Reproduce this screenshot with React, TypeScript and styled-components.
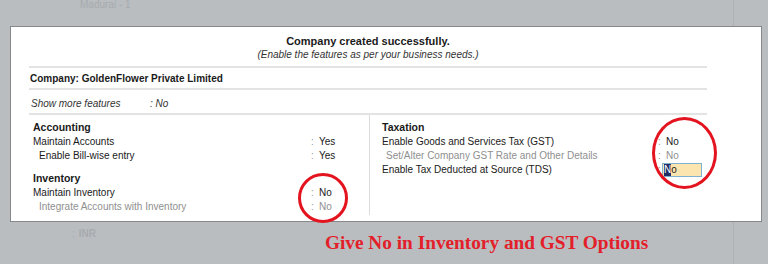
import React from "react";
import styled, { createGlobalStyle } from "styled-components";

const GlobalStyle = createGlobalStyle`
  html, body {
    margin: 0;
    padding: 0;
    background: #b9bdc0;
  }
  body {
    font-family: "Liberation Sans", Arial, sans-serif;
  }
`;

const Screen = styled.div`
  position: relative;
  width: 768px;
  height: 264px;
  overflow: hidden;
  background: #b9bdc0;
  display: flex;
`;

const Backdrop = styled.div`
  flex: 1;
  display: flex;
  flex-direction: column;
  justify-content: space-between;
  padding: 0 0 24px 72px;
  color: #a7abae;
  font-size: 10px;
`;

const FadedCity = styled.div`
  padding-left: 8px;
  line-height: 10px;
`;

const FadedCurrency = styled.div`
  font-weight: bold;
  line-height: 12px;

  span {
    font-weight: normal;
    margin-right: 4px;
  }
`;

const SideStrip = styled.div`
  width: 34px;
  border-left: 1px solid #adb1b4;
  background: #b9bdc0;
`;

const Dialog = styled.div`
  position: absolute;
  left: 10px;
  top: 26px;
  width: 713px;
  height: 194px;
  background: #fff;
  border: 1px solid #86898c;
  padding: 0 19px 0 18px;
  box-sizing: content-box;
  font-size: 10px;
  color: #1a1a1a;
  display: flex;
  flex-direction: column;
`;

const Inner = styled.div`
  width: 678px;
  display: flex;
  flex-direction: column;
  flex: 1;
`;

const Title = styled.div`
  margin-top: 7px;
  text-align: center;
  font-weight: bold;
  line-height: 14px;
  font-size: 11px;
`;

const Subtitle = styled.div`
  text-align: center;
  font-style: italic;
  line-height: 14px;
  color: #333;
`;

const Divider = styled.div<{ $gap: number }>`
  margin-top: ${({ $gap }) => $gap}px;
  height: 2px;
  background: #e3e3e3;
`;

const CompanyRow = styled.div`
  margin-top: 4px;
  padding-left: 1px;
  font-weight: bold;
  line-height: 14px;
`;

const ShowMore = styled.div`
  margin-top: 7px;
  padding-left: 2px;
  display: flex;
  font-style: italic;
  line-height: 14px;
  color: #333;

  span:first-child {
    width: 119px;
  }
`;

const Columns = styled.div`
  flex: 1;
  display: grid;
  grid-template-columns: 340px 1fr;
  margin-bottom: 6px;
`;

const Column = styled.div<{ $right?: boolean }>`
  padding: 5px ${({ $right }) => ($right ? "0 0 12px" : "0 0 4px")};
  border-left: ${({ $right }) => ($right ? "1px solid #dcdcdc" : "none")};
`;

const Heading = styled.div<{ $gap?: number }>`
  margin-top: ${({ $gap }) => $gap || 0}px;
  margin-bottom: 1px;
  font-weight: bold;
  font-size: 10.5px;
  line-height: 14px;
`;

const Row = styled.div<{ $indent: number; $dim?: boolean; $valueWidth: number }>`
  display: grid;
  grid-template-columns: 1fr ${({ $valueWidth }) => $valueWidth}px;
  line-height: 14px;
  padding-left: ${({ $indent }) => $indent}px;
  color: ${({ $dim }) => ($dim ? "#8f8f8f" : "#1a1a1a")};
`;

const Value = styled.div`
  display: flex;
  align-items: center;
`;

const Colon = styled.span`
  color: #9a9a9a;
  width: 8px;
`;

const EditBox = styled.span`
  display: inline-flex;
  align-items: center;
  width: 37px;
  height: 12px;
  margin-left: -4px;
  padding-left: 1px;
  background: #fde5b0;
  border: 1px solid #7fb2cf;
  color: #1a1a1a;
  line-height: 12px;
`;

const Caret = styled.span`
  background: #1f2f66;
  color: #fff;
`;

const Ring = styled.div<{ $x: number; $y: number; $w: number; $h: number }>`
  position: absolute;
  left: ${({ $x }) => $x}px;
  top: ${({ $y }) => $y}px;
  width: ${({ $w }) => $w}px;
  height: ${({ $h }) => $h}px;
  border: 3px solid #e3141f;
  border-radius: 50%;
  box-sizing: border-box;
  pointer-events: none;
`;

const Note = styled.div`
  position: absolute;
  left: 325px;
  top: 231px;
  font-family: "Liberation Serif", "Times New Roman", serif;
  font-weight: bold;
  font-size: 19.3px;
  line-height: 24px;
  color: #e3202a;
  white-space: nowrap;
`;

type Item = { label: string; value: React.ReactNode; sub?: boolean; dim?: boolean };

const accounting: Item[] = [
  { label: "Maintain Accounts", value: "Yes" },
  { label: "Enable Bill-wise entry", value: "Yes", sub: true },
];

const inventory: Item[] = [
  { label: "Maintain Inventory", value: "No" },
  { label: "Integrate Accounts with Inventory", value: "No", sub: true, dim: true },
];

const taxation: Item[] = [
  { label: "Enable Goods and Services Tax (GST)", value: "No" },
  { label: "Set/Alter Company GST Rate and Other Details", value: "No", sub: true, dim: true },
  {
    label: "Enable Tax Deducted at Source (TDS)",
    value: (
      <EditBox>
        <Caret>N</Caret>o
      </EditBox>
    ),
  },
];

const Rows = ({ items, valueWidth, indent }: { items: Item[]; valueWidth: number; indent: number }) => (
  <>
    {items.map((it) => (
      <Row key={it.label} $indent={it.sub ? indent : 0} $dim={it.dim} $valueWidth={valueWidth}>
        <span>{it.label}</span>
        <Value>
          <Colon>:</Colon>
          {it.value}
        </Value>
      </Row>
    ))}
  </>
);

export default function App() {
  return (
    <Screen>
      <GlobalStyle />
      <Backdrop>
        <FadedCity>Madurai - 1</FadedCity>
        <FadedCurrency>
          <span>:</span>INR
        </FadedCurrency>
      </Backdrop>
      <SideStrip />

      <Dialog>
        <Inner>
          <Title>Company created successfully.</Title>
          <Subtitle>(Enable the features as per your business needs.)</Subtitle>
          <Divider $gap={4} />
          <CompanyRow>Company: GoldenFlower Private Limited</CompanyRow>
          <Divider $gap={2} />
          <ShowMore>
            <span>Show more features</span>
            <span>: No</span>
          </ShowMore>
          <Divider $gap={2} />
          <Columns>
            <Column>
              <Heading>Accounting</Heading>
              <Rows items={accounting} valueWidth={58} indent={6} />
              <Heading $gap={8}>Inventory</Heading>
              <Rows items={inventory} valueWidth={58} indent={6} />
            </Column>
            <Column $right>
              <Heading>Taxation</Heading>
              <Rows items={taxation} valueWidth={49} indent={4} />
            </Column>
          </Columns>
        </Inner>
      </Dialog>

      <Ring $x={298} $y={173} $w={50} $h={50} />
      <Ring $x={652} $y={117} $w={65} $h={72} />
      <Note>Give No in Inventory and GST Options</Note>
    </Screen>
  );
}
